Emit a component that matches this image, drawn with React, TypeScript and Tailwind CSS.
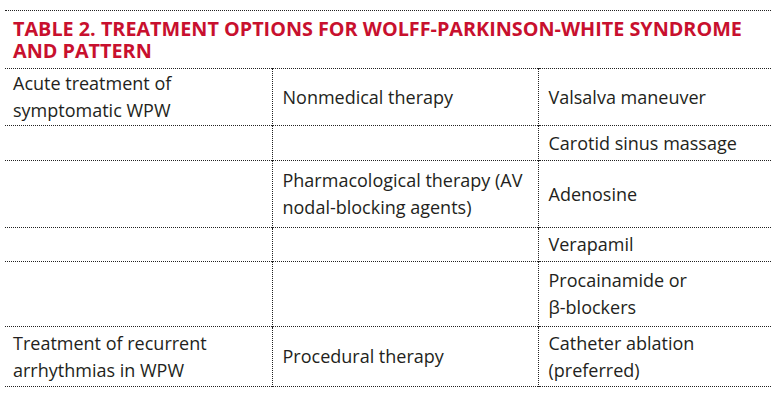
import type { ReactNode } from "react";

const rows: { a: ReactNode; b: ReactNode; c: ReactNode; h: string }[] = [
  { a: "Acute treatment of symptomatic WPW", b: "Nonmedical therapy", c: "Valsalva maneuver", h: "h-[57px]" },
  { a: "", b: "", c: "Carotid sinus massage", h: "h-[35px]" },
  { a: "", b: "Pharmacological therapy (AV nodal-blocking agents)", c: "Adenosine", h: "h-[67px]" },
  { a: "", b: "", c: "Verapamil", h: "h-[34px]" },
  {
    a: "",
    b: "",
    c: (
      <>
        Procainamide or <span className="whitespace-nowrap">β-blockers</span>
      </>
    ),
    h: "h-[65px]",
  },
  { a: "Treatment of recurrent arrhythmias in WPW", b: "Procedural therapy", c: "Catheter ablation (preferred)", h: "h-[60px]" },
];

export default function App() {
  return (
    <div className="w-[781px] h-[403px] bg-white pt-[10px] pl-[5px]" style={{ fontFamily: "'Open Sans', sans-serif" }}>
      <div className="w-[766px] border-t border-dotted border-[#222]">
        <h2 className="px-2 pt-[7px] pb-[6px] text-[19.8px] leading-[22px] font-bold text-[#c8102e]">
          TABLE 2. TREATMENT OPTIONS FOR WOLFF-PARKINSON-WHITE SYNDROME AND PATTERN
        </h2>
        <table className="w-full border-collapse text-[18px] leading-[27px] text-[#231f20]">
          <tbody>
            {rows.map((r, i) => (
              <tr key={i} className={`${r.h} border-t border-b border-dotted border-[#222]`}>
                <td className="w-[267px] pl-2 pr-3 align-middle">{r.a}</td>
                <td className="w-[266px] pl-[10px] pr-3 align-middle border-l border-dotted border-[#222]">{r.b}</td>
                <td className="pl-[10px] pr-2 align-middle border-l border-dotted border-[#222]">{r.c}</td>
              </tr>
            ))}
          </tbody>
        </table>
      </div>
    </div>
  );
}
